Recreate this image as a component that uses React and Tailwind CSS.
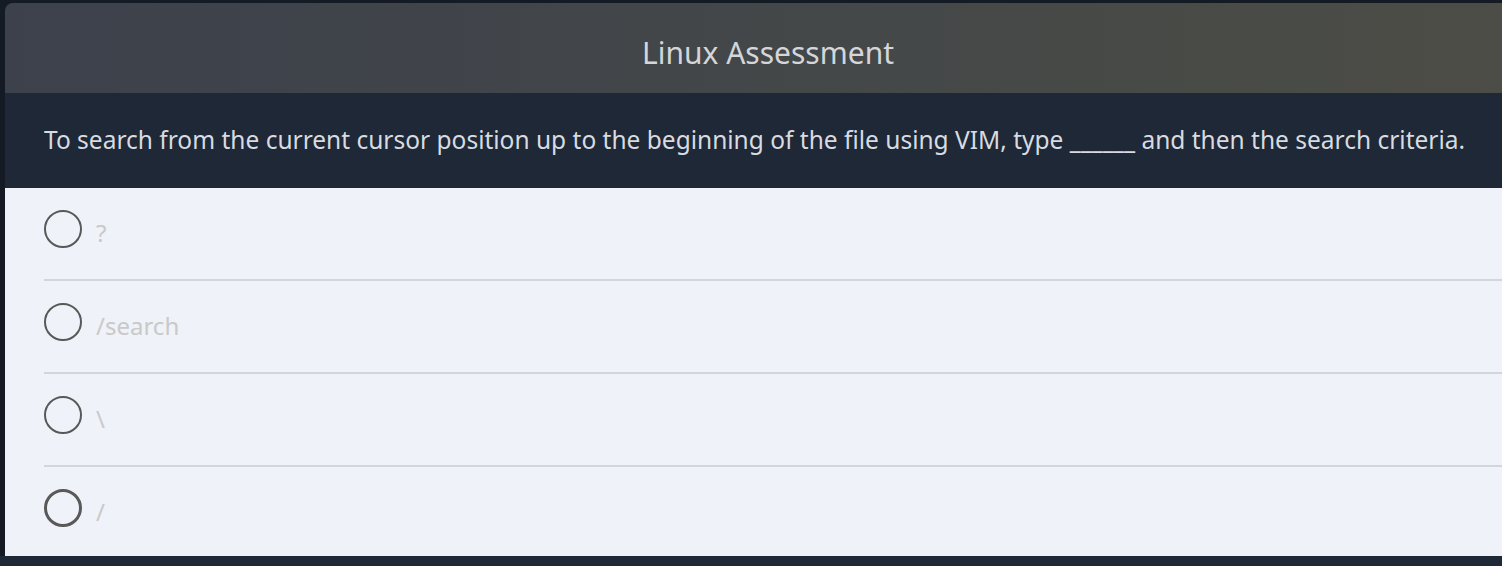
export default function App() {
  const options = ["?", "/search", "\\", "/"];
  return (
    <div className="w-[1502px] h-[566px] overflow-hidden bg-[#141b24]" style={{ fontFamily: '"Noto Sans", "Open Sans", sans-serif' }}>
      <div className="pt-[3px] pl-[5px]">
        <div className="w-[1526px] rounded-tl-[8px] overflow-hidden">
          <div className="h-[90px] pt-[10px] flex items-center justify-center bg-gradient-to-r from-[#3c414c] to-[#4c4d45]">
            <h1 className="text-[30px] text-[#d4d6da] leading-none">Linux Assessment</h1>
          </div>
          <div className="h-[95px] bg-[#1e2836] flex items-center pl-[39px]">
            <p className="text-[24.5px] text-[#d8dbe0] leading-none">
              To search from the current cursor position up to the beginning of the file using VIM, type ______ and then the search criteria.
            </p>
          </div>
          <div className="bg-[#eff2f8] pl-[39px]">
            {options.map((o, i) => (
              <div
                key={i}
                className={
                  "flex items-start pt-[22px] " +
                  (i < 3 ? "h-[93px] border-b-2 border-[#d2d5db]" : "h-[89px]")
                }
              >
                <span
                  className={
                    "w-[38px] h-[38px] rounded-full shrink-0 border-[#595959] " +
                    (i === 3 ? "border-[3px]" : "border-[2px]")
                  }
                />
                <span className="ml-[14px] mt-[8px] text-[24px] leading-[30px] text-[#c9c9c9]">{o}</span>
              </div>
            ))}
          </div>
        </div>
      </div>
      <div className="h-[10px] bg-[#1e2836]" />
    </div>
  );
}
